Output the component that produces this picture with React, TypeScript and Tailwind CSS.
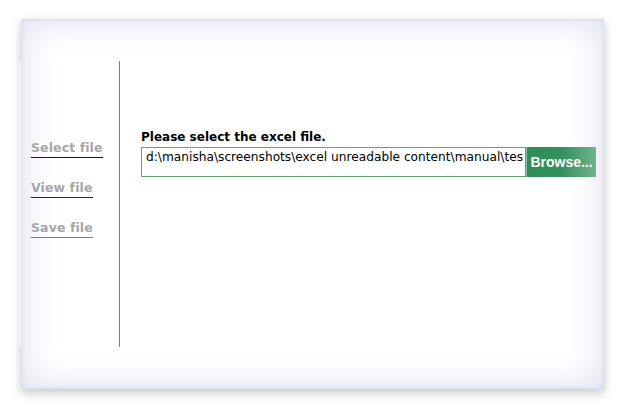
export default function App() {
  const links = [
    { label: 'Select file', line: 'border-[#1a1a1a]' },
    { label: 'View file', line: 'border-[#2a2a2a]' },
    { label: 'Save file', line: 'border-[#7a7a7a]' },
  ]

  return (
    <div className="w-[624px] h-[409px] bg-white overflow-hidden pt-[19px] pl-[21px]">
      <div className="w-[583px] h-[370px] bg-white pt-[42px] shadow-[inset_0_0_36px_rgba(205,210,232,0.75),inset_0_0_4px_rgba(200,204,222,0.9),0_4px_10px_rgba(0,0,0,0.22)]">
        <div className="flex h-[286px]">
          <div className="w-[99px] -ml-px pl-[10px] pt-[78px] border-l border-white">
            <div className="flex flex-col gap-[21px] items-start">
              {links.map((l) => (
                <a
                  key={l.label}
                  className={`inline-block text-[12.5px] leading-[18px] font-bold text-[#a6a6a6] border-b-[1.5px] ${l.line} tracking-[0.1px]`}
                  style={{ fontFamily: '"DejaVu Sans", sans-serif' }}
                >
                  {l.label}
                </a>
              ))}
            </div>
          </div>
          <div className="w-px bg-[#7d7d7d]" />
          <div className="flex-1 pl-[21px] pt-[68px]">
            <div
              className="text-[12px] leading-[16px] font-bold text-black"
              style={{ fontFamily: '"DejaVu Sans", sans-serif' }}
            >
              Please select the excel file.
            </div>
            <div className="flex mt-[2px]">
              <div
                className="w-[385px] h-[30px] border border-[#5fa37a] bg-white pl-[4px] pt-[1px] overflow-hidden whitespace-nowrap text-[12.2px] leading-[16px] text-black"
                style={{ fontFamily: '"DejaVu Sans", sans-serif' }}
              >
                d:\manisha\screenshots\excel unreadable content\manual\tes
              </div>
              <button
                className="w-[70px] h-[30px] bg-gradient-to-r from-[#2f8c58] via-[#338f5c] to-[#6fb58c] border-l border-[#8cc6a3] text-white text-[14px] font-bold leading-none pb-[1px]"
                style={{ fontFamily: '"Liberation Sans", Arial, sans-serif' }}
              >
                Browse...
              </button>
            </div>
          </div>
        </div>
      </div>
    </div>
  )
}
